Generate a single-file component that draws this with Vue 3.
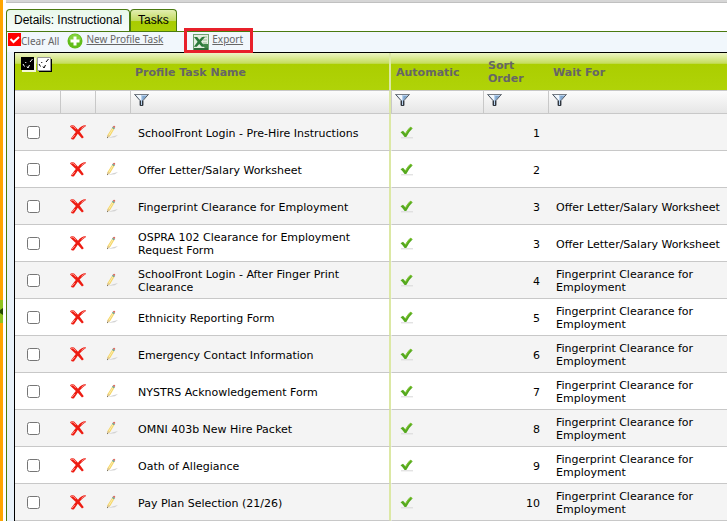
<template>
  <div class="page">
    <aside class="splitter">
      <button type="button" class="splitter-handle" aria-label="Collapse">
        <svg viewBox="0 0 3 23"><path d="M3 8v7L0 13v-3z" fill="#234a00" /></svg>
      </button>
    </aside>

    <main class="content">
      <div class="top-bar"></div>

      <nav class="tabs">
        <button
          v-for="tab in tabs"
          :key="tab"
          type="button"
          class="tab"
          :class="{ active: tab === activeTab }"
          @click="activeTab = tab"
        >
          {{ tab }}
        </button>
      </nav>

      <div class="panel">
        <div class="toolbar">
          <label class="clear-all">
            <input type="checkbox" v-model="clearAll" />
            <span class="clear-box">
              <svg v-if="clearAll" viewBox="0 0 13 13">
                <path d="M2.5 6l3 3 5.5-5" fill="none" stroke="#fff" stroke-width="2" />
              </svg>
            </span>
            <span>Clear All</span>
          </label>

          <a href="#" class="tool-link new-task" @click.prevent>
            <svg class="add-icon" viewBox="0 0 16 16">
              <circle cx="8" cy="8" r="7.5" fill="#62bd19" />
              <path d="M2 7a6 6 0 0 1 12 0q-6 2-12 0z" fill="#83d33b" />
              <path d="M8 3.5v9M3.5 8h9" stroke="#fff" stroke-width="3" />
            </svg>
            <span>New Profile Task</span>
          </a>

          <a href="#" class="tool-link export" @click.prevent>
            <svg class="excel-icon" viewBox="0 0 16 16">
              <rect x="0.5" y="0.5" width="15" height="15" fill="#e3eee0" stroke="#6fa373" />
              <path d="M10 3h4M10 6h4M10 9h4M11 12h3" stroke="#9abd98" />
              <path d="M1 3h3.2l2.2 2.8L9 3h3L8 7.8l4.2 5H8.8L6.2 9.9 3.8 12.8H.8l3.8-5z" fill="#2c7a3b" />
              <path d="M10 10h5v5h-3z" fill="#3f8849" />
              <path d="M1 15h14" stroke="#2c6e38" stroke-width="2" />
            </svg>
            <span>Export</span>
          </a>
        </div>

        <div class="grid">
          <table>
            <colgroup>
              <col class="col-check" />
              <col class="col-icon" />
              <col class="col-icon" />
              <col class="col-name" />
              <col class="col-auto" />
              <col class="col-sort" />
              <col />
            </colgroup>
            <thead>
              <tr class="head-row">
                <th colspan="3" class="select-cell">
                  <div class="select-buttons">
                    <button type="button" aria-label="Select all" @click="selectAll(true)">
                      <svg viewBox="0 0 15 15">
                        <path d="M1 1h14v14H1z" fill="#f4f8d6" />
                        <path d="M0 0h13v13H0z" fill="#000" />
                        <path d="M2 7l1.5 2.5M6 9.5l1 1.5 1.5-3M9 5l2.5-3M4.5 6l.5-1" fill="none" stroke="#fff" />
                      </svg>
                    </button>
                    <button type="button" aria-label="Select none" @click="selectAll(false)">
                      <svg viewBox="0 0 15 15">
                        <path d="M2 2h13v13H2z" fill="#000" />
                        <path d="M.5 .5h13v13H.5z" fill="#fff" stroke="#999" />
                        <path d="M2 7l1.5 2.5M6 9.5l1 1.5 1.5-3M9 5l2.5-3M4.5 6l.5-1" fill="none" stroke="#000" />
                      </svg>
                    </button>
                  </div>
                </th>
                <th class="frozen">Profile Task Name</th>
                <th>Automatic</th>
                <th>Sort Order</th>
                <th>Wait For</th>
              </tr>
              <tr class="filter-row">
                <td></td>
                <td></td>
                <td></td>
                <td v-for="col in filterColumns" :key="col" :class="{ frozen: col === 'Profile Task Name' }">
                  <button type="button" class="icon-btn" :aria-label="'Filter ' + col">
                    <svg class="filter-icon" viewBox="0 0 15 14">
                      <path d="M.7 1.5h13.6L9 7.5v5H6v-5z" fill="#b9d3ee" stroke="#4c535c" />
                      <path d="M2 2h5v9.5H6.5V7z" fill="#f3f8fd" />
                      <path d="M8.3 3h4L8.8 7v5h-.5z" fill="#7fa5cc" />
                      <path d="M.5 1.5h14" stroke="#777d84" />
                      <path d="M6.5 7.5v5h2v-5" fill="none" stroke="#30363e" />
                    </svg>
                  </button>
                </td>
              </tr>
            </thead>
            <tbody>
              <tr v-for="task in tasks" :key="task.name">
                <td class="check-cell">
                  <input type="checkbox" class="row-check" v-model="task.selected" :aria-label="task.name" />
                </td>
                <td class="icon-cell">
                  <button type="button" class="icon-btn" :aria-label="'Delete ' + task.name">
                    <svg class="delete-icon" viewBox="0 0 16 16">
                      <path d="M0 2.5Q1 .5 4 1.5l4 4.2Q11 1.5 15.5 1L16 2Q12.5 4 9.6 7.6l4.2 5.6-1.8 1.3L7.8 9.8 4 15.3Q2 16 .8 14.6L5.8 8z" fill="#ed1c12" />
                      <path d="M1.2 2.5q1.8-.8 2.8.4l1.8 2M1.8 14.3l3-3.3" fill="none" stroke="#ff8c82" />
                      <path d="M11.5 4.5Q13 2.5 15.5 1.5" fill="none" stroke="#f58b84" />
                    </svg>
                  </button>
                </td>
                <td class="icon-cell">
                  <button type="button" class="icon-btn" :aria-label="'Edit ' + task.name">
                    <svg class="edit-icon" viewBox="0 0 14 14">
                      <path d="M2 13l5-1.8 5-1.2-3 2.2z" fill="#d2d2d2" />
                      <path d="M1.5 10L6 3l2.2 1.2L4.2 11 1.2 13z" fill="#f5d565" />
                      <path d="M2.8 10.5L7 3.5" stroke="#fbeeb0" />
                      <path d="M1.5 10l2.5 1-2.8 2z" fill="#d9c39b" />
                      <path d="M1.2 11.8l.9.6-1 .8z" fill="#444" />
                      <path d="M6 3l.7-1.2 2.2 1.1-.7 1.3z" fill="#649b83" />
                      <path d="M6.7 1.8Q7.8.3 8.8 1q.9.6.1 1.9z" fill="#db6a62" />
                    </svg>
                  </button>
                </td>
                <td class="frozen text">{{ task.name }}</td>
                <td class="auto">
                  <svg class="tick-icon" viewBox="0 0 14 13">
                    <path d="M1 11.8h12" stroke="#d7d7d7" />
                    <path d="M.5 6.2L3 4.8l2.3 2.4Q8 2.5 10.5.8l2.2 1.4Q9 5.5 6.3 11H4.6Q3 8.2.5 6.2z" fill="#55a91f" />
                    <path d="M5.4 8Q8 3.5 10.7 1.5l1.2.8" fill="none" stroke="#8acb35" />
                  </svg>
                </td>
                <td class="sort">{{ task.sort }}</td>
                <td class="text">{{ task.waitFor }}</td>
              </tr>
            </tbody>
          </table>
        </div>
      </div>
    </main>
  </div>
</template>

<script setup>
import { ref } from 'vue'

const tabs = ['Details: Instructional', 'Tasks']
const activeTab = ref('Tasks')
const clearAll = ref(true)

const filterColumns = ['Profile Task Name', 'Automatic', 'Sort Order', 'Wait For']

const offer = 'Offer Letter/Salary Worksheet'
const fingerprint = 'Fingerprint Clearance for Employment'

const tasks = ref([
  { name: 'SchoolFront Login - Pre-Hire Instructions', sort: 1, waitFor: '', selected: false },
  { name: 'Offer Letter/Salary Worksheet', sort: 2, waitFor: '', selected: false },
  { name: 'Fingerprint Clearance for Employment', sort: 3, waitFor: offer, selected: false },
  { name: 'OSPRA 102 Clearance for Employment Request Form', sort: 3, waitFor: offer, selected: false },
  { name: 'SchoolFront Login - After Finger Print Clearance', sort: 4, waitFor: fingerprint, selected: false },
  { name: 'Ethnicity Reporting Form', sort: 5, waitFor: fingerprint, selected: false },
  { name: 'Emergency Contact Information', sort: 6, waitFor: fingerprint, selected: false },
  { name: 'NYSTRS Acknowledgement Form', sort: 7, waitFor: fingerprint, selected: false },
  { name: 'OMNI 403b New Hire Packet', sort: 8, waitFor: fingerprint, selected: false },
  { name: 'Oath of Allegiance', sort: 9, waitFor: fingerprint, selected: false },
  { name: 'Pay Plan Selection (21/26)', sort: 10, waitFor: fingerprint, selected: false },
])

function selectAll(value) {
  tasks.value.forEach(t => { t.selected = value })
}
</script>

<style>
body {
  margin: 0;
  background: #fff;
}
</style>

<style scoped>
.page {
  display: flex;
  min-height: 100vh;
  font-family: Verdana, "DejaVu Sans", sans-serif;
  font-size: 11px;
  line-height: 13px;
  color: #000;
}

button {
  font: inherit;
  color: inherit;
  cursor: pointer;
}

svg {
  display: block;
}

.splitter {
  position: relative;
  width: 3px;
  flex-shrink: 0;
  margin-right: 3px;
  background: #ffa500;
}

.splitter-handle {
  position: absolute;
  top: 300px;
  left: 0;
  width: 3px;
  height: 23px;
  padding: 0;
  border: 0;
  background: #8fc31f;
}

.content {
  flex: 1;
  min-width: 0;
  display: flex;
  flex-direction: column;
}

.top-bar {
  height: 2px;
  background: #d6d6d6;
  border-bottom: 1px solid #c0c0c0;
}

.tabs {
  display: flex;
  padding-top: 6px;
}

.tab {
  height: 22px;
  padding: 0 7px;
  border: 1px solid #4a7a10;
  border-bottom: 0;
  border-radius: 4px 4px 0 0;
  background: linear-gradient(#e9f8ea, #f6fcfb);
  font-family: Arial, "Liberation Sans", sans-serif;
  font-size: 12px;
}

.tab.active {
  background: linear-gradient(#e2eeb0 0, #c3db62 50%, #a8cc00 55%, #aacf08 100%);
}

.panel {
  flex: 1;
  border-top: 1px solid #4a7a10;
  border-left: 1px solid #4a7a10;
  background: #e9f2fa;
}

.toolbar {
  display: flex;
  align-items: flex-start;
  height: 20px;
  background: #f1f7fc;
  font-family: Tahoma, "Noto Sans", sans-serif;
  font-size: 10px;
  line-height: 14px;
  color: #666;
}

.clear-all {
  position: relative;
  display: flex;
  padding-top: 1px;
  margin-left: 1px;
  cursor: pointer;
}

.clear-all input {
  position: absolute;
  opacity: 0;
  margin: 0;
}

.clear-all span:last-child {
  padding-top: 1px;
}

.clear-box {
  width: 13px;
  height: 13px;
  background: #f00;
}

.tool-link {
  display: flex;
  gap: 3px;
  color: #666;
}

.new-task {
  margin-left: 8px;
}

.add-icon {
  width: 16px;
  height: 16px;
  margin-top: 1px;
}

/* outlined button, runs over the toolbar's edges */
.export {
  position: relative;
  margin-left: 30px;
}

.export::before {
  content: '';
  position: absolute;
  inset: -4px -10px -3px -9px;
  border: 3px solid #e8202a;
}

.excel-icon {
  width: 16px;
  height: 16px;
  margin-top: 2px;
}

.grid {
  margin-left: 7px;
  border-top: 1px solid #000;
  border-left: 1px solid #000;
  background: #fff;
}

table {
  width: 100%;
  table-layout: fixed;
  border-collapse: separate;
  border-spacing: 0;
}

.col-check { width: 46px; }
.col-icon { width: 35px; }
.col-name { width: 260px; }
.col-auto { width: 93px; }
.col-sort { width: 65px; }

th,
td {
  box-sizing: border-box;
  padding: 0;
  text-align: left;
}

.head-row {
  background: linear-gradient(#edf5c5 0, #c5dd5c 28%, #abce00 30%, #b0d308 100%);
}

.head-row th {
  height: 37px;
  padding: 1px 4px 0;
  color: #666;
}

.head-row .select-cell {
  padding: 0 4px;
  vertical-align: top;
}

.select-buttons {
  display: flex;
  gap: 1px;
  padding: 4px 2px;
}

.select-buttons button {
  width: 15px;
  height: 15px;
  padding: 0;
  border: 0;
  background: none;
}

.filter-row {
  background: linear-gradient(#fdfdfd, #e5e5e5);
}

.filter-row td {
  height: 24px;
  padding: 2px 3px 0;
  vertical-align: top;
  border-top: 1px solid #c8c8c8;
  border-bottom: 1px solid #c8c8c8;
  border-right: 1px solid #c8c8c8;
}

.filter-row td:last-child {
  border-right: 0;
}

.frozen,
.head-row .frozen,
.filter-row .frozen {
  border-right: 2px solid #dce8a5;
}

.frozen + th,
.frozen + td {
  border-left: 1px solid transparent;
}

.filter-row .frozen + td {
  border-left-color: #c8c8c8;
}

.icon-btn {
  display: inline-block;
  padding: 0;
  border: 0;
  background: none;
  vertical-align: top;
}

.filter-icon {
  width: 15px;
  height: 14px;
}

tbody tr {
  background: #fff;
}

tbody tr:nth-child(odd) {
  background: #f4f4f4;
}

tbody td {
  height: 37px;
  border-bottom: 1px solid #c8c8c8;
}

tbody .text {
  padding: 2px 4px 0 7px;
}

.check-cell {
  padding-left: 12px;
}

.icon-cell {
  padding-right: 2px;
  text-align: center;
}

.icon-cell .icon-btn {
  vertical-align: middle;
}

.row-check {
  width: 13px;
  height: 13px;
  margin: 0;
  vertical-align: middle;
}

.delete-icon {
  width: 16px;
  height: 16px;
}

.edit-icon {
  width: 14px;
  height: 14px;
}

.auto {
  padding-left: 8px;
}

.tick-icon {
  width: 14px;
  height: 13px;
}

.sort {
  padding: 2px 9px 0 0;
  text-align: right;
}
</style>
